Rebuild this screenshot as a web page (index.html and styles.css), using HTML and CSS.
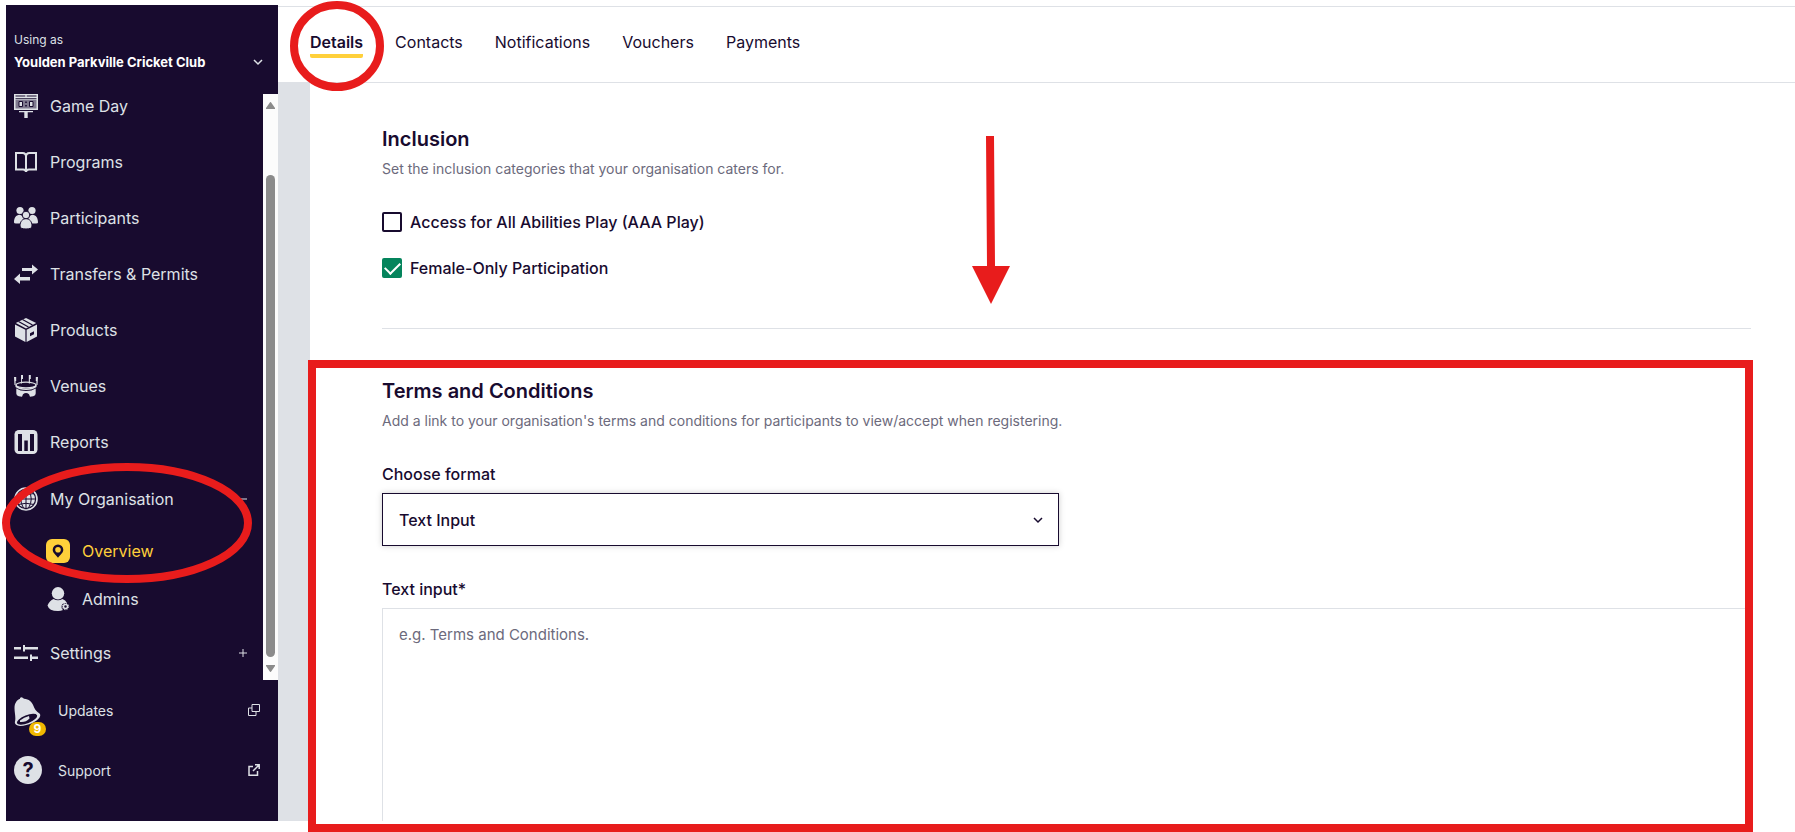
FILE: index.html
```html
<!DOCTYPE html>
<html lang="en">
<head>
<meta charset="UTF-8">
<meta name="viewport" content="width=device-width, initial-scale=1.0">
<title>My Organisation - Overview</title>
<link rel="stylesheet" href="styles.css">
</head>
<body>
    <div class="app">
        <aside class="sidebar">
            <button type="button" class="account">
                <span class="account-text">
                    <span class="account-label">Using as</span>
                    <span class="account-name">Youlden Parkville Cricket Club</span>
                </span>
                <svg class="chevron" viewBox="0 0 10 10"><path d="M1 3l4 4 4-4"/></svg>
            </button>

            <div class="nav-wrapper">
                <nav class="nav">
                    <a href="#" class="nav-item">
                        <svg class="icon" viewBox="0 0 24 24">
                            <path d="M0 0h24v16H0z"/>
                            <path fill="#180b2f" d="M1.500 1.500h9.800v1H1.500zM12.700 1.500h9.800v1h-9.800zM1.500 4h21v.8h-21z"/>
                            <path fill="#7f7a8f" d="M1.500 5.500h21v9h-21z"/>
                            <path fill="#dee1e6" stroke="#180b2f" stroke-width="1" d="M5 7.500h3.500v5H5zM15.500 7.500H19v5h-3.500z"/>
                            <path fill="#180b2f" d="M11.200 7.500h1.600v1.600h-1.600zM11.200 11h1.600v1.600h-1.600z"/>
                            <path d="M5 17h14v1.300H5zM10.300 18h3.400v6h-3.400z"/>
                        </svg>
                        Game Day
                    </a>
                    <a href="#" class="nav-item">
                        <svg class="icon line" viewBox="0 0 24 24"><path d="M2 3h6.500Q12 3 12 6.500V22Q12 19.500 9 19.500H2zM22 3h-6.500Q12 3 12 6.500V22Q12 19.500 15 19.500H22z"/></svg>
                        Programs
                    </a>
                    <a href="#" class="nav-item">
                        <svg class="icon" viewBox="0 0 24 24">
                            <circle cx="6" cy="4.500" r="3.600"/><circle cx="18" cy="4.500" r="3.600"/>
                            <path d="M0 16.500C0 12 2 9 5.500 8.800 8 9 9.500 11 10 13L7 17.500H2Q0 17.500 0 16.500zM24 16.500C24 12 22 9 18.500 8.800 16 9 14.500 11 14 13l3 4.500h5q2 0 2-1z"/>
                            <circle class="cut" cx="12" cy="9" r="3.800"/>
                            <path class="cut" d="M6 20c0-4.500 2.500-7.300 6-7.300s6 2.800 6 7.300q0 3-6 3t-6-3z"/>
                        </svg>
                        Participants
                    </a>
                    <a href="#" class="nav-item">
                        <svg class="icon" viewBox="0 0 24 24"><path d="M8 6h10V2.500l6 5-6 5V9H8zM16 15H6v-3.500l-6 5.500 6 5V18.500h10z"/></svg>
                        Transfers &amp; Permits
                    </a>
                    <a href="#" class="nav-item">
                        <svg class="icon" viewBox="0 0 24 24">
                            <path d="M12 0l10.200 5L12 10.500 1.800 5zM1 6.500l10.400 5.300V24L1 18.500zM23 6.500l-10.400 5.300V24L23 18.500z"/>
                            <path fill="none" stroke="#180b2f" stroke-width="1.200" d="M4.500 3.500l10 5.500M8.500 1.500l10 5.500"/>
                            <path fill="#180b2f" d="M16 15.200l4-2v3l-4 2z"/>
                        </svg>
                        Products
                    </a>
                    <a href="#" class="nav-item">
                        <svg class="icon" viewBox="0 0 24 24">
                            <path d="M0 3h2.200v4H1.600v4H.5zM7 1h2v4H7.900v4.500H7zM14.800 1h2v4h-.9v4.500h-1.100zM21.800 3H24l-.5 8h-1.100V7h-.6z"/>
                            <ellipse cx="12" cy="11" rx="10" ry="2.800" fill="none" stroke="#dee1e6" stroke-width="1.200"/>
                            <path d="M1.500 10.500Q5 14.500 12 14.500t10.500-4V13Q19 16 12 16T1.500 13z"/>
                            <path d="M2.300 14.500Q6 17 12 17t9.700-2.500v5q0 2-2.500 2.800L16 22.800l-1-2.500q-3-2.500-6 0l-1 2.500-3.200-.5Q2.300 21.500 2.300 19.500z"/>
                        </svg>
                        Venues
                    </a>
                    <a href="#" class="nav-item">
                        <svg class="icon" viewBox="0 0 24 24"><rect x=".5" width="23" height="24" rx="4.500"/><path fill="#180b2f" d="M4 4h4v17H4zM10.300 10.500h3.500V21h-3.500zM16 4h4v17h-4z"/></svg>
                        Reports
                    </a>
                    <a href="#" class="nav-item open">
                        <svg class="icon" viewBox="0 0 24 24">
                            <circle cx="12" cy="12" r="11" fill="none" stroke="#dee1e6" stroke-width="1.600"/>
                            <circle cx="12" cy="12" r="9"/>
                            <path fill="none" stroke="#180b2f" d="M12 2v20M2 12h20M4 6.500q8 2.500 16 0M4 17.500q8-2.500 16 0M9.500 3Q4 12 9.500 21M14.500 3Q20 12 14.500 21"/>
                        </svg>
                        My Organisation
                        <svg class="sign" viewBox="0 0 8 8"><path d="M0 4h8"/></svg>
                    </a>
                    <a href="#" class="nav-item sub active">
                        <svg class="icon" viewBox="0 0 24 24"><rect width="24" height="24" rx="6"/><path fill="#180b2f" fill-rule="evenodd" d="M12 5.500a5.300 5.300 0 0 1 5.300 5.300c0 3-2.600 4.500-5.300 7.900-2.700-3.400-5.300-4.900-5.300-7.900A5.300 5.300 0 0 1 12 5.500zm0 2.500a2.800 2.800 0 1 0 0 5.600A2.800 2.800 0 0 0 12 8z"/></svg>
                        Overview
                    </a>
                    <a href="#" class="nav-item sub">
                        <svg class="icon" viewBox="0 0 24 24">
                            <circle cx="12" cy="6.300" r="6.200"/>
                            <path d="M7.500 12q4.500 2.600 9 0 3 1 4.500 4-5.500-.5-5.500 4 0 2 1.500 3-2 1-5 1-9 0-10.500-5.500Q3.500 13.500 7.500 12z"/>
                            <circle cx="19.500" cy="19.500" r="2" fill="none" stroke="#dee1e6" stroke-width="1.500"/>
                            <circle cx="19.500" cy="19.500" r="3.200" fill="none" stroke="#dee1e6" stroke-dasharray="1.300 1.200"/>
                        </svg>
                        Admins
                    </a>
                    <a href="#" class="nav-item last">
                        <svg class="icon" viewBox="0 0 24 24"><path d="M0 6h7v2.500H0zM9 4h2v2h13v2.500H11v2H9zM0 15.500h14V18H0zM16 13.500h2v2h6V18h-6v2h-2z"/></svg>
                        Settings
                        <svg class="sign" viewBox="0 0 8 8"><path d="M0 4h8M4 0v8"/></svg>
                    </a>
                </nav>
                <div class="scrollbar">
                    <svg viewBox="0 0 9 7"><path d="M4.500 0Q5 0 5.500 1L9 6v1H0V6l3.500-5Q4 0 4.500 0z"/></svg>
                    <div class="thumb"></div>
                    <svg viewBox="0 0 9 7"><path d="M4.500 7Q5 7 5.500 6L9 1V0H0v1l3.500 5q.5 1 1 1z"/></svg>
                </div>
            </div>

            <div class="links">
                <a href="#" class="link-item">
                    <span class="bell">
                        <svg viewBox="0 0 28 30">
                            <path d="M6 1q1.500-1.500 3 0l1 .8c5 .3 8 3.200 9.500 7.200 1 3 2.500 5 6 7.500q1.500 1.500 0 4C22 25 15 28.500 6 29Q0 28 1 24.500C2 20 .5 16 .5 11 .5 6 3 3 6 1.800z"/>
                            <ellipse cx="13" cy="22.300" rx="10.800" ry="4" transform="rotate(-22 13 22.300)" fill="#180b2f"/>
                            <path d="M6 23.500q4-3.500 9-4.500l.5 2.500Q12 25.500 6 25z"/>
                        </svg>
                        <span class="badge">9</span>
                    </span>
                    Updates
                    <svg class="out thin" viewBox="0 0 12 12"><path d="M4 .5h7.500v7H4zM4 4H.5v7.500H8v-4"/></svg>
                </a>
                <a href="#" class="link-item">
                    <span class="help">?</span>
                    Support
                    <svg class="out" viewBox="0 0 12 12"><path d="M5 2.500H1v8.700h8.500V7M7 .8h4.200V5M11 1L5 7"/></svg>
                </a>
            </div>
        </aside>

        <main class="main">
            <nav class="tabs">
                <a href="#" class="tab current">Details</a>
                <a href="#" class="tab">Contacts</a>
                <a href="#" class="tab">Notifications</a>
                <a href="#" class="tab">Vouchers</a>
                <a href="#" class="tab">Payments</a>
            </nav>
            <form class="content">
                <section class="section">
                    <h2>Inclusion</h2>
                    <p class="hint">Set the inclusion categories that your organisation caters for.</p>
                    <label class="check"><input type="checkbox">Access for All Abilities Play (AAA Play)</label>
                    <label class="check"><input type="checkbox" checked>Female-Only Participation</label>
                </section>
                <section class="section">
                    <h2>Terms and Conditions</h2>
                    <p class="hint">Add a link to your organisation's terms and conditions for participants to view/accept when registering.</p>
                    <label class="field-label" for="format">Choose format</label>
                    <div class="select-box">
                        <select id="format">
                            <option>Text Input</option>
                        </select>
                        <svg class="chevron" viewBox="0 0 10 10"><path d="M1 3l4 4 4-4"/></svg>
                    </div>
                    <label class="field-label" for="terms">Text input*</label>
                    <textarea id="terms" placeholder="e.g. Terms and Conditions."></textarea>
                </section>
            </form>
        </main>
    </div>

    <!-- red highlights drawn over the page -->
    <svg class="mark mark-tab" viewBox="0 0 94 90"><ellipse cx="47" cy="45" rx="43" ry="41"/></svg>
    <svg class="mark mark-menu" viewBox="0 0 252 120"><ellipse cx="126" cy="60" rx="121" ry="56"/></svg>
    <svg class="mark mark-arrow" viewBox="0 0 38 168"><path d="M14 0h8l1 130h15L19 168 0 130h15z"/></svg>
    <div class="mark mark-terms"></div>
</body>
</html>
```
FILE: styles.css
```css
*{
    box-sizing: border-box;
}
body{
    margin: 0;
    position: relative;
    background: #fff;
    color: #180b2f;
    font-family: Inter, "Liberation Sans", sans-serif;
    font-size: 16px;
    overflow: hidden;
}
a{
    color: inherit;
    text-decoration: none;
}
.app{
    display: flex;
    height: 100vh;
    padding: 5px 0 11px 6px;
}

/* sidebar */
.sidebar{
    display: flex;
    flex-direction: column;
    flex: 0 0 272px;
    background: #180b2f;
    color: #dee1e6;
}
.account{
    display: flex;
    align-items: flex-end;
    justify-content: space-between;
    height: 89px;
    padding: 0 15px 22px 8px;
    border: 0;
    background: none;
    color: inherit;
    font: inherit;
    text-align: left;
}
.account-text{
    display: flex;
    flex-direction: column;
    gap: 2px;
    line-height: 20px;
}
.account-label{
    font-size: 12px;
}
.account-name{
    color: #fff;
    font-size: 13px;
    font-weight: 700;
}
.chevron{
    width: 10px;
    height: 10px;
    margin-bottom: 5px;
    fill: none;
    stroke: currentColor;
    stroke-width: 1.5;
}
.nav-wrapper{
    display: flex;
    flex: 1;
    min-height: 0;
}
.nav{
    flex: 1;
    overflow: hidden;
}
.nav-item{
    display: flex;
    align-items: center;
    gap: 12px;
    height: 56px;
    padding: 0 16px 0 8px;
}
.nav-item:first-child{
    margin-top: -16px;
}
.nav-item.open{
    height: 57px;
}
.nav-item.sub{
    height: 48px;
    padding-left: 40px;
}
.nav-item.active{
    color: #ffd03a;
}
.nav-item.last{
    margin-top: 2px;
}
.icon{
    flex: none;
    width: 24px;
    height: 24px;
    fill: currentColor;
}
.line{
    fill: none;
    stroke: currentColor;
    stroke-width: 2;
}
.cut{
    stroke: #180b2f;
    stroke-width: 1;
}
.sign{
    width: 8px;
    height: 8px;
    margin-left: auto;
    stroke: currentColor;
}
.scrollbar{
    display: flex;
    flex-direction: column;
    align-items: center;
    justify-content: space-between;
    width: 15px;
    padding: 8px 0;
    background: #fcfcfc;
}
.scrollbar svg{
    width: 9px;
    height: 7px;
    fill: #8b8b8b;
}
.thumb{
    width: 9px;
    height: 482px;
    margin-top: 58px;
    border-radius: 5px;
    background: #8b8b8b;
}
.links{
    padding: 0 18px 21px 8px;
}
.link-item{
    display: flex;
    align-items: center;
    gap: 16px;
    height: 60px;
    font-size: 14px;
}
.bell{
    position: relative;
    width: 28px;
    height: 30px;
    margin-top: 4px;
    fill: currentColor;
}
.bell svg{
    display: block;
}
.badge{
    position: absolute;
    right: -4px;
    bottom: -9px;
    width: 17px;
    height: 14px;
    border-radius: 7px;
    background: #f0b800;
    color: #fff;
    font-size: 12px;
    font-weight: 700;
    line-height: 14px;
    text-align: center;
}
.help{
    width: 28px;
    height: 28px;
    border-radius: 50%;
    background: #dee1e6;
    color: #180b2f;
    font-size: 20px;
    font-weight: 700;
    line-height: 28px;
    text-align: center;
}
.out{
    width: 12px;
    height: 12px;
    margin-left: auto;
    fill: none;
    stroke: currentColor;
    stroke-width: 1.5;
}
.thin{
    stroke-width: 1;
}

/* page */
.main{
    display: flex;
    flex-direction: column;
    flex: 1;
    min-width: 0;
    overflow: hidden;
}
.tabs{
    display: flex;
    gap: 32px;
    height: 77px;
    margin-top: 1px;
    padding: 23px 32px 0;
    border-top: 1px solid #dee1e6;
    border-bottom: 1px solid #dee1e6;
    flex: none;
}
.tab{
    height: 28px;
    line-height: 24px;
}
.current{
    font-weight: 600;
    border-bottom: 4px solid #ffd03a;
    border-radius: 2px;
}
.content{
    flex: 1;
    min-height: 0;
    padding: 0 44px 0 72px;
    border-left: 32px solid #dee1e6;
}
.section{
    padding-top: 42px;
}
.section + .section{
    margin-top: 37px;
    border-top: 1px solid #dee1e6;
    padding-top: 48px;
}
h2{
    margin: 0;
    font-size: 20px;
    font-weight: 600;
    line-height: 28px;
}
.hint{
    margin: 6px 0 20px;
    color: #6c6a7c;
    font-size: 14px;
    line-height: 20px;
}
.check{
    display: flex;
    align-items: center;
    gap: 8px;
    height: 46px;
    font-weight: 500;
}
.check input{
    appearance: none;
    width: 20px;
    height: 20px;
    margin: 0;
    border: 2px solid #180b2f;
    border-radius: 2px;
}
.check input:checked{
    display: grid;
    place-items: center;
    border-color: #04845c;
    background: #04845c;
}
.check input:checked::before{
    content: "";
    width: 13px;
    height: 7px;
    border: solid #fff;
    border-width: 0 0 2px 2px;
    transform: translateY(-2px) rotate(-45deg);
}
.field-label{
    display: block;
    margin: 32px 0 8px;
    font-weight: 500;
    line-height: 22px;
}
.select-box{
    display: flex;
    align-items: center;
    width: calc(50% - 8px);
    height: 53px;
    border: 1px solid #180b2f;
    box-shadow: 0 0 6px #ccc;
}
.select-box select{
    flex: 1;
    height: 100%;
    padding: 0 16px;
    border: 0;
    appearance: none;
    background: #fff;
    color: inherit;
    font: inherit;
    font-weight: 500;
}
.select-box .chevron{
    margin: 0 15px 0 0;
}
textarea{
    display: block;
    width: 100%;
    height: 320px;
    padding: 16px;
    border: 1px solid #dee1e6;
    resize: none;
    font: inherit;
    font-size: 15px;
    line-height: 20px;
}
textarea::placeholder{
    color: #6c6a7c;
}

/* highlights */
.mark{
    position: absolute;
    pointer-events: none;
    fill: none;
    stroke: #e81c1c;
    stroke-width: 8;
}
.mark-tab{
    left: 290px;
    top: 1px;
    width: 94px;
}
.mark-menu{
    left: 1px;
    top: 463px;
    width: 252px;
}
.mark-arrow{
    left: 972px;
    top: 136px;
    width: 38px;
    fill: #e81c1c;
    stroke: none;
}
.mark-terms{
    left: 308px;
    right: 42px;
    top: 360px;
    bottom: 0;
    border: 8px solid #e81c1c;
}
```
